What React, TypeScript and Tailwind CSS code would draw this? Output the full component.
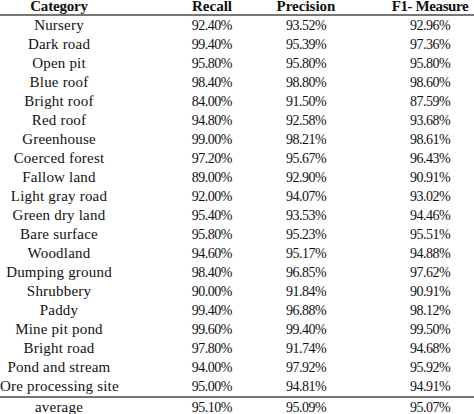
const rows: [string, string, string, string][] = [
  ["Nursery", "92.40%", "93.52%", "92.96%"],
  ["Dark road", "99.40%", "95.39%", "97.36%"],
  ["Open pit", "95.80%", "95.80%", "95.80%"],
  ["Blue roof", "98.40%", "98.80%", "98.60%"],
  ["Bright roof", "84.00%", "91.50%", "87.59%"],
  ["Red roof", "94.80%", "92.58%", "93.68%"],
  ["Greenhouse", "99.00%", "98.21%", "98.61%"],
  ["Coerced forest", "97.20%", "95.67%", "96.43%"],
  ["Fallow land", "89.00%", "92.90%", "90.91%"],
  ["Light gray road", "92.00%", "94.07%", "93.02%"],
  ["Green dry land", "95.40%", "93.53%", "94.46%"],
  ["Bare surface", "95.80%", "95.23%", "95.51%"],
  ["Woodland", "94.60%", "95.17%", "94.88%"],
  ["Dumping ground", "98.40%", "96.85%", "97.62%"],
  ["Shrubbery", "90.00%", "91.84%", "90.91%"],
  ["Paddy", "99.40%", "96.88%", "98.12%"],
  ["Mine pit pond", "99.60%", "99.40%", "99.50%"],
  ["Bright road", "97.80%", "91.74%", "94.68%"],
  ["Pond and stream", "94.00%", "97.92%", "95.92%"],
  ["Ore processing site", "95.00%", "94.81%", "94.91%"],
];

function Row({ cells }: { cells: [string, string, string, string] }) {
  return (
    <div className="flex h-[19px] leading-[19px] whitespace-nowrap">
      <div className="w-[118px] text-center text-[15px] tracking-[0.2px]">{cells[0]}</div>
      <div className="w-[114px] text-right text-[14px] tracking-[-0.5px]">{cells[1]}</div>
      <div className="w-[148px] text-center text-[14px] tracking-[-0.5px]">{cells[2]}</div>
      <div className="flex-1 pl-[6px] text-center text-[14px] tracking-[-0.5px]">{cells[3]}</div>
    </div>
  );
}

export default function App() {
  return (
    <div
      className="w-[474px] h-[414px] overflow-hidden bg-white text-[#111]"
      style={{ fontFamily: '"Liberation Serif", serif' }}
    >
      {/* header */}
      <div className="flex h-[14px] leading-[12px] font-bold text-[15px] whitespace-nowrap border-b-2 border-[#777] box-content">
        <div className="w-[118px] text-center tracking-[-0.2px]">Category</div>
        <div className="w-[114px] text-right">Recall</div>
        <div className="w-[148px] text-center">Precision</div>
        <div className="flex-1 pl-[6px] text-center tracking-[-0.4px]">F1- Measure</div>
      </div>

      <div>
        {rows.map((r) => (
          <Row key={r[0]} cells={r} />
        ))}
      </div>

      <div className="border-t-2 border-[#777]">
        <Row cells={["average", "95.10%", "95.09%", "95.07%"]} />
      </div>
    </div>
  );
}
